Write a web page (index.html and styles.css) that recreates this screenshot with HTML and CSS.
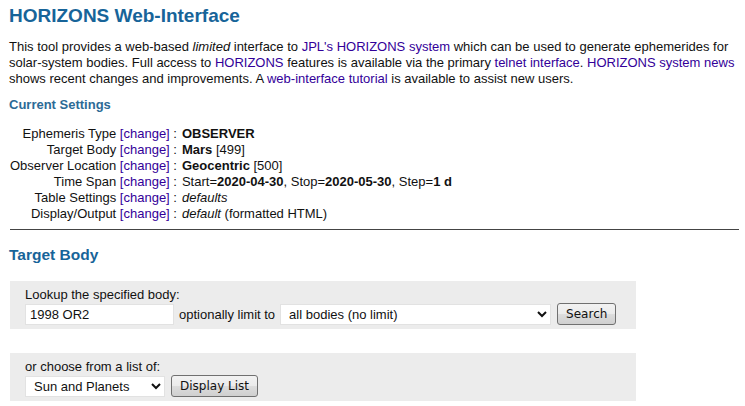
FILE: index.html
```html
<!DOCTYPE html>
<html lang="en">
<head>
  <meta charset="UTF-8" />
  <title>HORIZONS Web-Interface</title>
  <link rel="stylesheet" href="styles.css">
</head>
<body>
  <div class="page">
    <h1>HORIZONS Web-Interface</h1>
    <p class="intro">
      This tool provides a web-based <i>limited</i> interface to <a href="#">JPL's HORIZONS system</a> which can be used to generate ephemerides for<br>
      solar-system bodies. Full access to <a href="#">HORIZONS</a> features is available via the primary <a href="#">telnet interface</a>. <a href="#">HORIZONS system news</a><br>
      shows recent changes and improvements. A <a href="#">web-interface tutorial</a> is available to assist new users.
    </p>

    <h3>Current Settings</h3>
    <table class="settings">
      <tr>
        <td class="label">Ephemeris Type <a href="#">[change]</a> :</td>
        <td><b>OBSERVER</b></td>
      </tr>
      <tr>
        <td class="label">Target Body <a href="#">[change]</a> :</td>
        <td><b>Mars</b> [499]</td>
      </tr>
      <tr>
        <td class="label">Observer Location <a href="#">[change]</a> :</td>
        <td><b>Geocentric</b> [500]</td>
      </tr>
      <tr>
        <td class="label">Time Span <a href="#">[change]</a> :</td>
        <td>Start=<b>2020-04-30</b>, Stop=<b>2020-05-30</b>, Step=<b>1 d</b></td>
      </tr>
      <tr>
        <td class="label">Table Settings <a href="#">[change]</a> :</td>
        <td><i>defaults</i></td>
      </tr>
      <tr>
        <td class="label">Display/Output <a href="#">[change]</a> :</td>
        <td><i>default</i> (formatted HTML)</td>
      </tr>
    </table>

    <hr>

    <h2>Target Body</h2>

    <form class="panel">
      <div class="panel-label">Lookup the specified body:</div>
      <div class="panel-row">
        <input type="text" class="body-input" value="1998 OR2">
        <span class="inline-text">optionally limit to</span>
        <select class="limit-select">
          <option>all bodies (no limit)</option>
        </select>
        <button type="button">Search</button>
      </div>
    </form>

    <form class="panel">
      <div class="panel-label">or choose from a list of:</div>
      <div class="panel-row">
        <select class="list-select">
          <option>Sun and Planets</option>
        </select>
        <button type="button">Display List</button>
      </div>
    </form>
  </div>
</body>
</html>
```

FILE: styles.css
```css
body {
  margin: 0;
  font-family: "Liberation Sans", Arial, sans-serif;
  font-size: 13px;
  color: #111;
  background: #fff;
}

.page {
  padding: 5px 6px 0 9px;
}

a {
  color: #330099;
  text-decoration: none;
}

h1 {
  margin: 0 0 12px 0;
  font-size: 19px;
  line-height: 22px;
  color: #176499;
}

.intro {
  margin: 0 0 10px 0;
  line-height: 16px;
  white-space: nowrap;
}

h3 {
  margin: 0 0 13px 0;
  font-size: 13px;
  line-height: 16px;
  color: #2c6a96;
}

.settings {
  border-collapse: collapse;
  margin-left: 1px;
}

.settings td {
  padding: 0;
  line-height: 16px;
  white-space: nowrap;
}

.settings td.label {
  text-align: right;
  padding-right: 5px;
}

hr {
  margin: 7px 0 16px 1px;
  border: 0;
  border-top: 1px solid #444;
  width: 729px;
}

h2 {
  margin: 0 0 17px 0;
  font-size: 15.5px;
  line-height: 18px;
  color: #176499;
}

.panel {
  width: 595px;
  margin: 0 0 24px 1px;
  padding: 6px 16px 4px 15px;
  background: #ececec;
}

.panel-label {
  line-height: 15px;
  margin-bottom: 1px;
}

.panel-row {
  display: flex;
  align-items: center;
  gap: 5px;
}

.panel-row > * {
  flex-shrink: 0;
}

.inline-text {
  white-space: nowrap;
}

input,
select {
  font-family: "Liberation Sans", Arial, sans-serif;
  font-size: 13px;
  height: 21px;
  box-sizing: border-box;
  border: 1px solid #e2e2e2;
  background: #fff;
  color: #111;
  padding: 0 4px;
}

.body-input {
  width: 149px;
}

.limit-select {
  width: 271px;
}

.list-select {
  width: 140px;
}

button {
  font-family: "DejaVu Sans", Tahoma, sans-serif;
  font-size: 12px;
  height: 22px;
  padding: 0 8px;
  margin-left: 1px;
  border: 1px solid #707070;
  border-radius: 3px;
  background: linear-gradient(#f2f2f2, #ebebeb 50%, #dddddd 51%, #cfcfcf);
  color: #111;
}
```
